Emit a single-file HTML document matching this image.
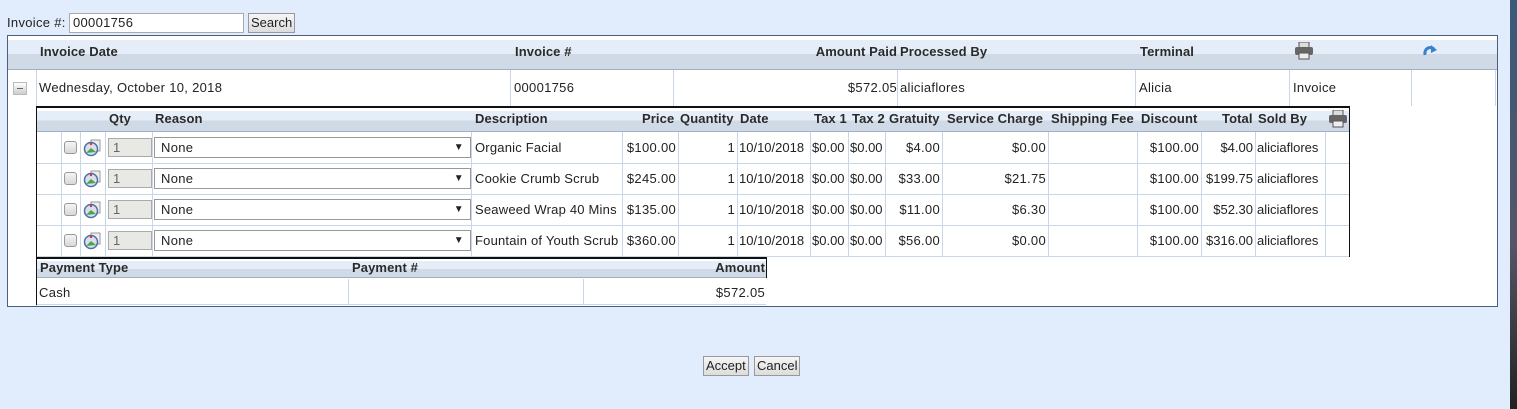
<!DOCTYPE html>
<html><head><meta charset="utf-8"><style>
*{box-sizing:border-box;margin:0;padding:0}
body{width:1517px;height:409px;background:#e1edfd;font-family:"Liberation Sans",sans-serif;font-size:13px;letter-spacing:0.3px;color:#222;position:relative;overflow:hidden}
.a{position:absolute;white-space:nowrap}
.hd{position:absolute;background:linear-gradient(#fff 0,#fff 12%,#e4edf8 12%,#e4edf8 55%,#d0dae6 55%,#d0dae6 100%);border-bottom:1px solid #9fb1c8}
.b{font-weight:bold;color:#2a2a2a;letter-spacing:0.1px}
.vl{position:absolute;width:1px;background:#c9d6e6}
.hl{position:absolute;height:1px;background:#c9d6e6}
.r{text-align:right}
.cb{position:absolute;width:13px;height:13px;border:1px solid #999;border-radius:3px;background:linear-gradient(#f4f4f4,#d8d8d8)}
.q{position:absolute;width:44px;height:19px;border:1px solid #aaa;background:#e8e8e4;color:#666;padding-left:4px;line-height:17px}
.sel{position:absolute;width:317px;height:21px;border:1px solid #999;background:#fff;padding-left:6px;line-height:19px}
.sel:after{content:"▼";position:absolute;right:6px;top:0;font-size:10px}
.ic{position:absolute;width:18px;height:18px}
.btn{position:absolute;height:20px;border:1px solid #999;background:linear-gradient(#f6f6f6,#dcdcdc);padding:0 2px;line-height:18px;letter-spacing:0}
</style></head><body>
<div class="a" style="left:7px;top:15px">Invoice #:</div>
<div class="a" style="left:69px;top:13px;width:175px;height:20px;border:1px solid #aaa;background:#fff;padding-left:3px;line-height:18px">00001756</div>
<div class="btn" style="left:248px;top:13px">Search</div>

<div class="a" style="left:7px;top:35px;width:1491px;height:272px;border:1px solid #4a5f80;background:#fff"></div>
<div class="hd" style="left:8px;top:36px;width:1489px;height:34px"></div>
<div class="a b" style="left:40px;top:44px">Invoice Date</div>
<div class="a b" style="left:515px;top:44px">Invoice #</div>
<div class="a b r" style="left:780px;top:44px;width:117px">Amount Paid</div>
<div class="a b" style="left:900px;top:44px">Processed By</div>
<div class="a b" style="left:1140px;top:44px">Terminal</div>
<svg class="a" style="left:1294px;top:42px" width="20" height="18"><rect x="5" y="0" width="10" height="6" fill="#ddd" stroke="#555"/><rect x="1" y="5" width="18" height="8" rx="2" fill="#666"/><rect x="5" y="11" width="10" height="6" fill="#eee" stroke="#555"/></svg>
<svg class="a" style="left:1422px;top:43px" width="16" height="14"><path d="M3 12 C2 5 8 3 12 6" stroke="#3a7fd0" stroke-width="3" fill="none"/><path d="M9 2 L15 7 L9 10Z" fill="#3a7fd0"/></svg>
<div class="vl" style="left:36px;top:70px;height:36px"></div>
<div class="vl" style="left:510px;top:70px;height:36px"></div>
<div class="vl" style="left:673px;top:70px;height:36px"></div>
<div class="vl" style="left:897px;top:70px;height:36px"></div>
<div class="vl" style="left:1135px;top:70px;height:36px"></div>
<div class="vl" style="left:1289px;top:70px;height:36px"></div>
<div class="vl" style="left:1411px;top:70px;height:36px"></div>
<div class="vl" style="left:1495px;top:70px;height:36px"></div>
<div class="vl" style="left:36px;top:106px;height:200px"></div>
<div class="a" style="left:13px;top:82px;width:14px;height:13px;border:1px solid #bbb;background:linear-gradient(#fff,#ccc)"><div style="position:absolute;left:3px;top:5px;width:6px;height:1px;background:#666"></div></div>
<div class="a" style="left:39px;top:80px">Wednesday, October 10, 2018</div>
<div class="a" style="left:514px;top:80px">00001756</div>
<div class="a r" style="left:800px;top:80px;width:97px">$572.05</div>
<div class="a" style="left:900px;top:80px">aliciaflores</div>
<div class="a" style="left:1139px;top:80px">Alicia</div>
<div class="a" style="left:1293px;top:80px">Invoice</div>

<div class="a" style="left:36px;top:106px;width:1314px;height:151px;border:1px solid #111;border-bottom:none;border-top-width:2px"></div>
<div class="hd" style="left:37px;top:108px;width:1312px;height:24px"></div>
<div class="a b" style="left:109px;top:111px">Qty</div>
<div class="a b" style="left:155px;top:111px">Reason</div>
<div class="a b" style="left:475px;top:111px">Description</div>
<div class="a b" style="left:642px;top:111px">Price</div>
<div class="a b" style="left:680px;top:111px">Quantity</div>
<div class="a b" style="left:740px;top:111px">Date</div>
<div class="a b" style="left:814px;top:111px">Tax 1</div>
<div class="a b" style="left:852px;top:111px">Tax 2</div>
<div class="a b" style="left:889px;top:111px">Gratuity</div>
<div class="a b" style="left:947px;top:111px">Service Charge</div>
<div class="a b" style="left:1051px;top:111px">Shipping Fee</div>
<div class="a b" style="left:1141px;top:111px">Discount</div>
<div class="a b" style="left:1222px;top:111px">Total</div>
<div class="a b" style="left:1258px;top:111px">Sold By</div>
<svg class="a" style="left:1328px;top:110px" width="20" height="18"><rect x="5" y="0" width="10" height="6" fill="#ddd" stroke="#555"/><rect x="1" y="5" width="18" height="8" rx="2" fill="#666"/><rect x="5" y="11" width="10" height="6" fill="#eee" stroke="#555"/></svg>

<div id="rows"></div>
<script>
const rows=[["Organic Facial","$100.00","$4.00","$0.00","$4.00"],["Cookie Crumb Scrub","$245.00","$33.00","$21.75","$199.75"],["Seaweed Wrap 40 Mins","$135.00","$11.00","$6.30","$52.30"],["Fountain of Youth Scrub","$360.00","$56.00","$0.00","$316.00"]];
const cols=[61,80,105,152,471,622,678,737,810,848,885,942,1048,1137,1201,1255,1325];
let h="";
rows.forEach((r,i)=>{const y=132+i*31;
cols.forEach(c=>h+=`<div class="vl" style="left:${c}px;top:${y}px;height:31px"></div>`);
h+=`<div class="hl" style="left:37px;top:${y+31}px;width:1312px"></div>`;
h+=`<div class="cb" style="left:64px;top:${y+9}px"></div>`;
h+=`<svg class="ic" style="left:83px;top:${y+7}px" viewBox="0 0 18 18"><rect x="8" y="1" width="9" height="11" fill="#eee" stroke="#999"/><circle cx="8" cy="10" r="6.5" fill="#dde" stroke="#4a6fa8" stroke-width="1.5"/><path d="M3 14 L8 9 L13 13Z" fill="#4a4"/><circle cx="8" cy="5" r="1.2" fill="#d33"/></svg>`;
h+=`<div class="q" style="left:108px;top:${y+6}px">1</div>`;
h+=`<div class="sel" style="left:154px;top:${y+5}px">None</div>`;
const t=y+8;
h+=`<div class="a" style="left:475px;top:${t}px;letter-spacing:0.2px">${r[0]}</div>`;
h+=`<div class="a r" style="left:600px;top:${t}px;width:76px">${r[1]}</div>`;
h+=`<div class="a r" style="left:680px;top:${t}px;width:55px">1</div>`;
h+=`<div class="a" style="left:739px;top:${t}px;letter-spacing:0">10/10/2018</div>`;
h+=`<div class="a" style="left:812px;top:${t}px;letter-spacing:0">$0.00</div>`;
h+=`<div class="a" style="left:850px;top:${t}px;letter-spacing:0">$0.00</div>`;
h+=`<div class="a r" style="left:885px;top:${t}px;width:55px">${r[2]}</div>`;
h+=`<div class="a r" style="left:942px;top:${t}px;width:104px">${r[3]}</div>`;
h+=`<div class="a r" style="left:1137px;top:${t}px;width:62px">$100.00</div>`;
h+=`<div class="a r" style="left:1201px;top:${t}px;width:52px;letter-spacing:0">${r[4]}</div>`;
h+=`<div class="a" style="left:1257px;top:${t}px;letter-spacing:0">aliciaflores</div>`;
});
document.getElementById("rows").innerHTML=h;
</script>

<div class="a" style="left:36px;top:257px;width:731px;height:48px;border:1px solid #111;border-top-width:2px;border-bottom:none;border-right:none"></div>
<div class="a" style="left:766px;top:257px;width:1px;height:21px;background:#111"></div>
<div class="hd" style="left:37px;top:259px;width:729px;height:19px"></div>
<div class="a b" style="left:40px;top:260px">Payment Type</div>
<div class="a b" style="left:352px;top:260px">Payment #</div>
<div class="a b r" style="left:660px;top:260px;width:105px">Amount</div>
<div class="vl" style="left:348px;top:279px;height:25px"></div>
<div class="vl" style="left:583px;top:279px;height:25px"></div>
<div class="hl" style="left:37px;top:304px;width:729px"></div>
<div class="a" style="left:39px;top:285px">Cash</div>
<div class="a r" style="left:660px;top:285px;width:105px">$572.05</div>

<div class="btn" style="left:703px;top:356px">Accept</div>
<div class="btn" style="left:754px;top:356px">Cancel</div>
<div class="a" style="left:1510px;top:0;width:7px;height:409px;background:linear-gradient(#3a5a7a,#556 60%,#222)"></div>
</body></html>
